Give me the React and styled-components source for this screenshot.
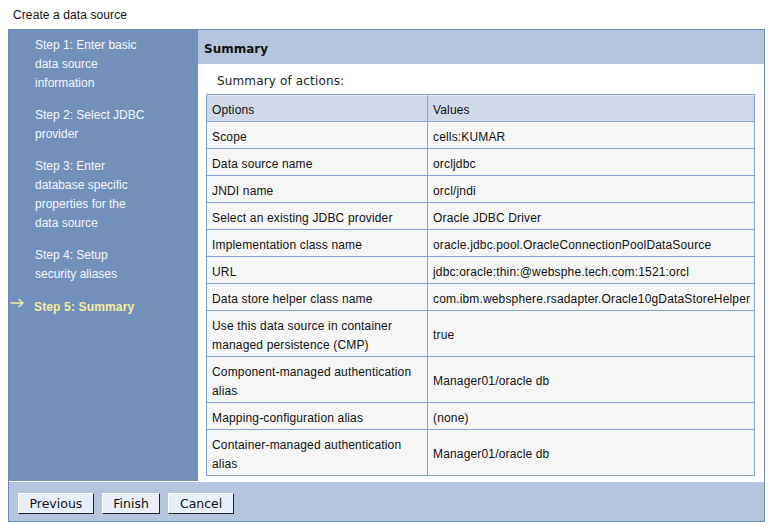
import React from "react";
import styled, { createGlobalStyle } from "styled-components";

const GlobalStyle = createGlobalStyle`
  html, body {
    margin: 0;
    padding: 0;
    background: #fff;
    color: #000;
    font-family: "Liberation Sans", Arial, sans-serif;
  }
`;

const steps = [
  { id: 1, lines: ["Step 1: Enter basic", "data source", "information"] },
  { id: 2, lines: ["Step 2: Select JDBC", "provider"] },
  { id: 3, lines: ["Step 3: Enter", "database specific", "properties for the", "data source"] },
  { id: 4, lines: ["Step 4: Setup", "security aliases"] },
];

const rows = [
  { option: ["Scope"], value: "cells:KUMAR", height: 27 },
  { option: ["Data source name"], value: "orcljdbc", height: 27 },
  { option: ["JNDI name"], value: "orcl/jndi", height: 27 },
  { option: ["Select an existing JDBC provider"], value: "Oracle JDBC Driver", height: 27 },
  { option: ["Implementation class name"], value: "oracle.jdbc.pool.OracleConnectionPoolDataSource", height: 27 },
  { option: ["URL"], value: "jdbc:oracle:thin:@websphe.tech.com:1521:orcl", height: 27 },
  { option: ["Data store helper class name"], value: "com.ibm.websphere.rsadapter.Oracle10gDataStoreHelper", height: 27 },
  { option: ["Use this data source in container", "managed persistence (CMP)"], value: "true", height: 46 },
  { option: ["Component-managed authentication", "alias"], value: "Manager01/oracle db", height: 46 },
  { option: ["Mapping-configuration alias"], value: "(none)", height: 27 },
  { option: ["Container-managed authentication", "alias"], value: "Manager01/oracle db", height: 46 },
];

export default function App() {
  return (
    <Page>
      <GlobalStyle />
      <PageTitle>Create a data source</PageTitle>
      <Frame>
        <Body>
          <Sidebar>
            {steps.map((step) => (
              <Step key={step.id}>
                {step.lines.map((line) => (
                  <div key={line}>{line}</div>
                ))}
              </Step>
            ))}
            <CurrentStep>
              <Arrow width="15" height="12" viewBox="0 0 15 12">
                <path d="M0.5 5H13M8.5 1L13 5L8.5 9" fill="none" stroke="#f5eca0" strokeWidth="1.3" />
              </Arrow>
              Step 5: Summary
            </CurrentStep>
          </Sidebar>
          <Main>
            <SectionHeader>Summary</SectionHeader>
            <Intro>Summary of actions:</Intro>
            <SummaryTable>
              <colgroup>
                <col style={{ width: 221 }} />
                <col />
              </colgroup>
              <thead>
                <tr>
                  <HeadCell>Options</HeadCell>
                  <HeadCell>Values</HeadCell>
                </tr>
              </thead>
              <tbody>
                {rows.map((row) => (
                  <Row key={row.option[0]} $height={row.height}>
                    <Cell>
                      {row.option.map((line) => (
                        <div key={line}>{line}</div>
                      ))}
                    </Cell>
                    <Cell>{row.value}</Cell>
                  </Row>
                ))}
              </tbody>
            </SummaryTable>
          </Main>
        </Body>
        <Footer>
          <Button>Previous</Button>
          <Button>Finish</Button>
          <Button>Cancel</Button>
        </Footer>
      </Frame>
    </Page>
  );
}

const Page = styled.div`
  width: 769px;
  height: 525px;
  padding: 0 4px 0 8px;
  box-sizing: border-box;
  overflow: hidden;
`;

const PageTitle = styled.div`
  height: 29px;
  padding: 8px 0 0 5px;
  box-sizing: border-box;
  font-size: 12px;
  line-height: 14px;
  letter-spacing: 0.1px;
  color: #111;
`;

const Frame = styled.div`
  width: 757px;
  height: 493px;
  box-sizing: border-box;
  border: 1px solid #6b8ab8;
  display: flex;
  flex-direction: column;
`;

const Body = styled.div`
  flex: 1;
  display: flex;
  min-height: 0;
`;

const Sidebar = styled.div`
  width: 189px;
  flex: none;
  background: #7390bb;
  padding-top: 6px;
  box-sizing: border-box;
  color: #f4f6fa;
  font-size: 12px;
  line-height: 19px;
`;

const Step = styled.div`
  padding-left: 26px;
  margin-bottom: 13px;
`;

const CurrentStep = styled.div`
  position: relative;
  padding-left: 25px;
  margin-top: 14px;
  font-weight: bold;
  letter-spacing: 0.15px;
  color: #f5eca0;
`;

const Arrow = styled.svg`
  position: absolute;
  left: 1px;
  top: 0;
`;

const Main = styled.div`
  flex: 1;
  min-width: 0;
  background: #fff;
`;

const SectionHeader = styled.div`
  height: 34px;
  background: #b4c5dd;
  padding: 12px 0 0 6px;
  box-sizing: border-box;
  font-family: "DejaVu Sans", sans-serif;
  font-size: 12px;
  line-height: 14px;
  font-weight: bold;
  color: #111;
`;

const Intro = styled.div`
  height: 30px;
  padding: 10px 0 0 19px;
  box-sizing: border-box;
  font-family: "DejaVu Sans", sans-serif;
  font-size: 12px;
  line-height: 15px;
  letter-spacing: 0.15px;
  color: #222;
`;

const SummaryTable = styled.table`
  width: 549px;
  margin-left: 8px;
  table-layout: fixed;
  border-collapse: collapse;
  border: 1px solid #84a1d4;
  font-size: 12px;
  line-height: 19px;
  letter-spacing: 0.16px;
`;

const HeadCell = styled.th`
  height: 27px;
  padding: 4px 5px 0;
  box-sizing: border-box;
  background: #d1d9e9;
  border: 1px solid #84a1d4;
  box-shadow: inset 0 1px 0 #e8ecf4;
  font-weight: normal;
  text-align: left;
  color: #111;
`;

const Row = styled.tr`
  height: ${(props) => props.$height}px;
`;

const Cell = styled.td`
  padding: 4px 5px 0;
  background: #f6f6f6;
  border: 1px solid #84a1d4;
  color: #111;
  white-space: nowrap;
`;

const Footer = styled.div`
  height: 40px;
  flex: none;
  background: #b4c5dd;
  padding: 11px 0 0 9px;
  box-sizing: border-box;
  display: flex;
  align-items: flex-start;
  gap: 8px;
  border-top: 1px solid #fff;
`;

const Button = styled.button`
  height: 21px;
  padding: 0 10.5px;
  background: #e8effb;
  border: 1px solid;
  border-color: #fff #222 #222 #fff;
  font-family: "DejaVu Sans", sans-serif;
  font-size: 12.5px;
  color: #111;
`;
